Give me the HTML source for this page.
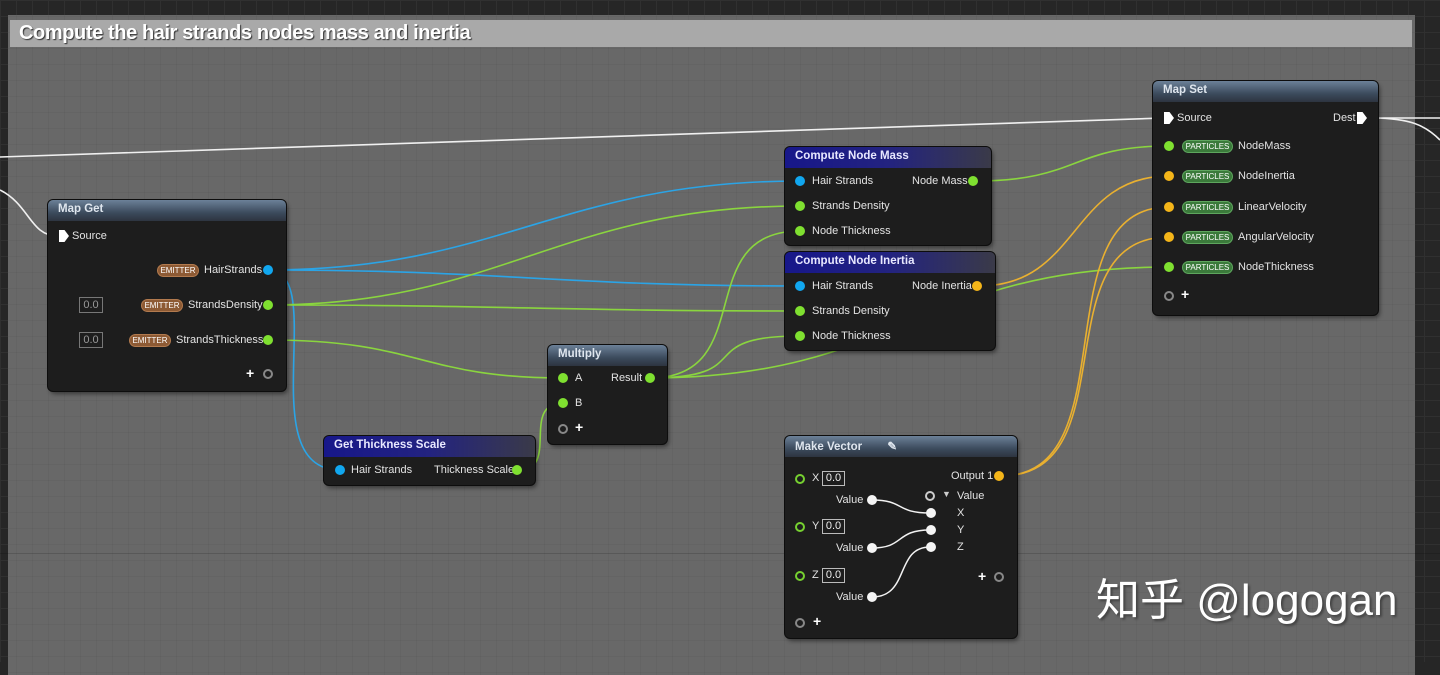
<!DOCTYPE html>
<html><head><meta charset="utf-8"><style>
*{margin:0;padding:0;box-sizing:border-box}
body{width:1440px;height:662px;overflow:hidden;position:relative;background:#262626;font-family:"Liberation Sans","Noto Sans CJK SC",sans-serif;color:#e6e6e6;font-size:11px}
.bggrid{position:absolute;inset:0;background-image:linear-gradient(#303030 1px,transparent 1px),linear-gradient(90deg,#303030 1px,transparent 1px);background-size:16px 16px}
.cm{position:absolute;left:8px;top:15px;width:1407px;height:660px;background-color:#686868;background-image:linear-gradient(rgba(0,0,0,.035) 1px,transparent 1px),linear-gradient(90deg,rgba(0,0,0,.035) 1px,transparent 1px);background-size:16px 16px;background-position:8px 1px}
.cmh{position:absolute;left:10px;top:20px;width:1402px;height:27px;background:#a9a9a9;color:#fff;font-size:20px;font-weight:bold;padding:2px 9px;text-shadow:1px 1px 1px #333;letter-spacing:-.4px}
.node{position:absolute;background:#1d1d1d;border-radius:5px;box-shadow:0 0 0 1px #0d0d0d,2px 3px 4px rgba(0,0,0,.45)}
.hd{height:21px;border-radius:5px 5px 0 0;padding:3px 10px;font-weight:bold;font-size:11.5px;color:#dfe6ee;background:linear-gradient(#6c8198,#3c4b5d 60%,#2d3440)}
.hb{color:#e8e8ff;background:linear-gradient(90deg,#17178a,#232380 50%,#3a3a48);}
.t{position:absolute;white-space:nowrap;color:#e3e3e3}
.p{position:absolute;width:10px;height:10px;border-radius:50%}
.g{background:#7fe030}.b{background:#11a7ef}.y{background:#f4b519}.w{background:#f5f5f5}
.o{border:2px solid #888;background:none}
.og{border:2px solid #76d030;background:none}
.ex{position:absolute;width:10px;height:12px;background:#fff;clip-path:polygon(0 0,55% 0,100% 50%,55% 100%,0 100%)}
.tag{position:absolute;font-size:8px;height:13px;line-height:11px;text-align:center;border-radius:7px;color:#fff;white-space:nowrap}
.em{background:#8d5a34;border:1px solid #b27a4e;width:42px}
.pa{background:#3b7a3b;border:1px solid #5ea65e;width:51px}
.box{position:absolute;border:1px solid #777;color:#999;font-size:11px;width:24px;height:16px;text-align:center;line-height:14px}
.box2{position:absolute;border:1px solid #bbb;color:#eee;font-size:11px;width:23px;height:15px;text-align:center;line-height:13px}
.plus{position:absolute;color:#fff;font-weight:bold;font-size:14px}
</style></head><body>
<div class="bggrid"></div>
<div class="cm"></div>
<div class="cmh">Compute the hair strands nodes mass and inertia</div>
<div style="position:absolute;left:0;top:553px;width:1440px;height:1px;background:rgba(0,0,0,.15)"></div>

<svg style="position:absolute;left:0;top:0" width="1440" height="662" fill="none" stroke-width="1.6">
<g stroke="#f0f0f0">
<path d="M0 157 L1163 118"/>
<path d="M0 190 C30 205,30 236,58 236"/>
<path d="M1370 118 L1440 118"/>
<path d="M1370 118 C1410 118,1425 125,1440 140"/>
</g>
<g stroke="#2ba4e6">
<path d="M268 270 C500 270,560 181,800 181"/>
<path d="M268 270 C500 270,560 286,800 286"/>
<path d="M268 270 C330 270,250 470,340 470"/>
</g>
<g stroke="#8ad53f">
<path d="M268 305 C500 305,560 206,800 206"/>
<path d="M268 305 C500 305,560 311,800 311"/>
<path d="M268 340 C420 340,420 378,563 378"/>
<path d="M519 470 C560 470,520 403,563 403"/>
<path d="M650 378 C760 378,690 231,800 231"/>
<path d="M650 378 C760 378,690 336,800 336"/>
<path d="M650 378 C900 378,920 267,1169 267"/>
<path d="M975 181 C1080 181,1070 146,1169 146"/>
</g>
<g stroke="#e9b030">
<path d="M979 286 C1080 286,1070 176,1169 176"/>
<path d="M1001 476 C1130 476,1040 207,1169 207"/>
<path d="M1001 476 C1130 476,1040 237,1169 237"/>
</g>
</svg>

<!-- Map Get -->
<div class="node" style="left:48px;top:200px;width:238px;height:191px"><div class="hd">Map Get</div></div>
<div class="ex" style="left:59px;top:230px"></div><div class="t" style="left:72px;top:230px">Source</div>
<div class="tag em" style="left:157px;top:264px">EMITTER</div><div class="t" style="left:204px;top:264px">HairStrands</div><div class="p b" style="left:263px;top:265px"></div>
<div class="box" style="left:79px;top:297px">0.0</div>
<div class="tag em" style="left:141px;top:299px">EMITTER</div><div class="t" style="left:188px;top:299px">StrandsDensity</div><div class="p g" style="left:263px;top:300px"></div>
<div class="box" style="left:79px;top:332px">0.0</div>
<div class="tag em" style="left:129px;top:334px">EMITTER</div><div class="t" style="left:176px;top:334px">StrandsThickness</div><div class="p g" style="left:263px;top:335px"></div>
<div class="plus" style="left:246px;top:365px">+</div><div class="p o" style="left:263px;top:369px"></div>

<!-- Compute Node Mass -->
<div class="node" style="left:785px;top:147px;width:206px;height:98px"><div class="hd hb">Compute Node Mass</div></div>
<div class="p b" style="left:795px;top:176px"></div><div class="t" style="left:812px;top:175px">Hair Strands</div>
<div class="t" style="left:912px;top:175px">Node Mass</div><div class="p g" style="left:968px;top:176px"></div>
<div class="p g" style="left:795px;top:201px"></div><div class="t" style="left:812px;top:200px">Strands Density</div>
<div class="p g" style="left:795px;top:226px"></div><div class="t" style="left:812px;top:225px">Node Thickness</div>

<!-- Compute Node Inertia -->
<div class="node" style="left:785px;top:252px;width:210px;height:98px"><div class="hd hb">Compute Node Inertia</div></div>
<div class="p b" style="left:795px;top:281px"></div><div class="t" style="left:812px;top:280px">Hair Strands</div>
<div class="t" style="left:912px;top:280px">Node Inertia</div><div class="p y" style="left:972px;top:281px"></div>
<div class="p g" style="left:795px;top:306px"></div><div class="t" style="left:812px;top:305px">Strands Density</div>
<div class="p g" style="left:795px;top:331px"></div><div class="t" style="left:812px;top:330px">Node Thickness</div>

<!-- Multiply -->
<div class="node" style="left:548px;top:345px;width:119px;height:99px"><div class="hd">Multiply</div></div>
<div class="p g" style="left:558px;top:373px"></div><div class="t" style="left:575px;top:372px">A</div>
<div class="t" style="left:611px;top:372px">Result</div><div class="p g" style="left:645px;top:373px"></div>
<div class="p g" style="left:558px;top:398px"></div><div class="t" style="left:575px;top:397px">B</div>
<div class="p o" style="left:558px;top:424px"></div><div class="plus" style="left:575px;top:419px">+</div>

<!-- Get Thickness Scale -->
<div class="node" style="left:324px;top:436px;width:211px;height:49px"><div class="hd hb">Get Thickness Scale</div></div>
<div class="p b" style="left:335px;top:465px"></div><div class="t" style="left:351px;top:464px">Hair Strands</div>
<div class="t" style="left:434px;top:464px">Thickness Scale</div><div class="p g" style="left:512px;top:465px"></div>

<!-- Make Vector -->
<div class="node" style="left:785px;top:436px;width:232px;height:202px"><div class="hd">Make Vector <span style="margin-left:22px">✎</span></div></div>
<div class="p og" style="left:795px;top:474px"></div><div class="t" style="left:812px;top:472px">X</div><div class="box2" style="left:822px;top:471px">0.0</div>
<div class="t" style="left:951px;top:470px">Output 1</div><div class="p y" style="left:994px;top:471px"></div>
<div class="t" style="left:836px;top:494px">Value</div><div class="p w" style="left:867px;top:495px"></div>
<div class="p o" style="left:925px;top:491px;border-color:#ccc"></div><div class="t" style="left:942px;top:489px;font-size:9px;color:#ccc">▼</div><div class="t" style="left:957px;top:490px">Value</div>
<div class="p w" style="left:926px;top:508px"></div><div class="t" style="left:957px;top:507px">X</div>
<div class="p og" style="left:795px;top:522px"></div><div class="t" style="left:812px;top:520px">Y</div><div class="box2" style="left:822px;top:519px">0.0</div>
<div class="p w" style="left:926px;top:525px"></div><div class="t" style="left:957px;top:524px">Y</div>
<div class="t" style="left:836px;top:542px">Value</div><div class="p w" style="left:867px;top:543px"></div>
<div class="p w" style="left:926px;top:542px"></div><div class="t" style="left:957px;top:541px">Z</div>
<div class="p og" style="left:795px;top:571px"></div><div class="t" style="left:812px;top:569px">Z</div><div class="box2" style="left:822px;top:568px">0.0</div>
<div class="plus" style="left:978px;top:568px">+</div><div class="p o" style="left:994px;top:572px"></div>
<div class="t" style="left:836px;top:591px">Value</div><div class="p w" style="left:867px;top:592px"></div>
<div class="p o" style="left:795px;top:618px"></div><div class="plus" style="left:813px;top:613px">+</div>
<svg style="position:absolute;left:0;top:0" width="1440" height="662" fill="none" stroke="#f2f2f2" stroke-width="1.5">
<path d="M872 500 C905 500,895 513,930 513"/>
<path d="M872 548 C905 548,895 530,930 530"/>
<path d="M872 597 C910 597,895 547,930 547"/>
</svg>

<!-- Map Set -->
<div class="node" style="left:1153px;top:81px;width:225px;height:234px"><div class="hd">Map Set</div></div>
<div class="ex" style="left:1164px;top:112px"></div><div class="t" style="left:1177px;top:112px">Source</div>
<div class="t" style="left:1333px;top:112px">Dest</div><div class="ex" style="left:1357px;top:112px"></div>
<div class="p g" style="left:1164px;top:141px"></div><div class="tag pa" style="left:1182px;top:140px">PARTICLES</div><div class="t" style="left:1238px;top:140px">NodeMass</div>
<div class="p y" style="left:1164px;top:171px"></div><div class="tag pa" style="left:1182px;top:170px">PARTICLES</div><div class="t" style="left:1238px;top:170px">NodeInertia</div>
<div class="p y" style="left:1164px;top:202px"></div><div class="tag pa" style="left:1182px;top:201px">PARTICLES</div><div class="t" style="left:1238px;top:201px">LinearVelocity</div>
<div class="p y" style="left:1164px;top:232px"></div><div class="tag pa" style="left:1182px;top:231px">PARTICLES</div><div class="t" style="left:1238px;top:231px">AngularVelocity</div>
<div class="p g" style="left:1164px;top:262px"></div><div class="tag pa" style="left:1182px;top:261px">PARTICLES</div><div class="t" style="left:1238px;top:261px">NodeThickness</div>
<div class="p o" style="left:1164px;top:291px"></div><div class="plus" style="left:1181px;top:286px">+</div>

<div class="t" style="left:1096px;top:564px;font-size:44px;color:#fff;text-shadow:2px 2px 2px #444">知乎 @logogan</div>
</body></html>
